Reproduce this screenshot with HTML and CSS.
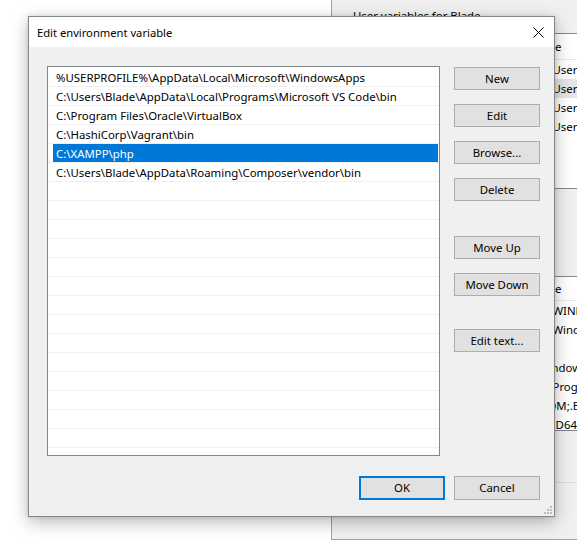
FILE: index.html
```html
<!DOCTYPE html>
<html>
<head>
<meta charset="utf-8">
<link rel="stylesheet" href="styles.css">
</head>
<body>
<div class="desktop">
  <div class="bgwin">
    <div class="bg-label">User variables for Blade</div>
    <div class="bg-list bg-list1">
      <div class="bg-head"><span class="c1">Variable</span><span class="c2">Value</span></div>
      <div class="bg-row"><span class="c1">OneDrive</span><span class="c2">C:\Users\Blade\OneDrive</span></div>
      <div class="bg-row sel"><span class="c1">Path</span><span class="c2">C:\Users\Blade\AppData\Local\Microsoft</span></div>
      <div class="bg-row"><span class="c1">TEMP</span><span class="c2">C:\Users\Blade\AppData\Local\Temp</span></div>
      <div class="bg-row"><span class="c1">TMP</span><span class="c2">C:\Users\Blade\AppData\Local\Temp</span></div>
    </div>
    <div class="bg-list bg-list2">
      <div class="bg-head"><span class="c1">Variable</span><span class="c2">Value</span></div>
      <div class="bg-row"><span class="c1">ComSpec</span><span class="c2">C:\WINDOWS\system32\cmd.exe</span></div>
      <div class="bg-row"><span class="c1">DriverData</span><span class="c2">C:\Windows\System32\Drivers\DriverData</span></div>
      <div class="bg-row"><span class="c1">NUMBER_OF_PROCESSORS</span><span class="c2">8</span></div>
      <div class="bg-row"><span class="c1">OS</span><span class="c2">Windows_NT</span></div>
      <div class="bg-row"><span class="c1">Path</span><span class="c2">C:\Program Files\Common Files</span></div>
      <div class="bg-row"><span class="c1">PATHEXT</span><span class="c2">.COM;.EXE;.BAT;.CMD</span></div>
      <div class="bg-row"><span class="c1">PROCESSOR_ARCHITECTURE</span><span class="c2">AMD64</span></div>
    </div>
    <div class="bg-group-end"></div>
    <div class="bg-bottom"></div>
  </div>

  <div class="dialog">
    <div class="titlebar">
      <span class="title">Edit environment variable</span>
      <svg class="close" width="11" height="11" viewBox="0 0 11 11"><path d="M0.5 0.5 L10.5 10.5 M10.5 0.5 L0.5 10.5" stroke="#000" stroke-width="1" fill="none"/></svg>
    </div>
    <div class="body">
      <div class="main">
        <div class="list">
          <div class="row"><span class="cell">%USERPROFILE%\AppData\Local\Microsoft\WindowsApps</span></div>
          <div class="row"><span class="cell">C:\Users\Blade\AppData\Local\Programs\Microsoft VS Code\bin</span></div>
          <div class="row"><span class="cell">C:\Program Files\Oracle\VirtualBox</span></div>
          <div class="row"><span class="cell">C:\HashiCorp\Vagrant\bin</span></div>
          <div class="row selected"><span class="cell">C:\XAMPP\php</span></div>
          <div class="row"><span class="cell">C:\Users\Blade\AppData\Roaming\Composer\vendor\bin</span></div>
          <div class="row"><span class="cell"></span></div>
          <div class="row"><span class="cell"></span></div>
          <div class="row"><span class="cell"></span></div>
          <div class="row"><span class="cell"></span></div>
          <div class="row"><span class="cell"></span></div>
          <div class="row"><span class="cell"></span></div>
          <div class="row"><span class="cell"></span></div>
          <div class="row"><span class="cell"></span></div>
          <div class="row"><span class="cell"></span></div>
          <div class="row"><span class="cell"></span></div>
          <div class="row"><span class="cell"></span></div>
          <div class="row"><span class="cell"></span></div>
          <div class="row"><span class="cell"></span></div>
          <div class="row"><span class="cell"></span></div>
          <div class="row"><span class="cell"></span></div>
        </div>
        <div class="side">
          <button class="btn">New</button>
          <button class="btn">Edit</button>
          <button class="btn">Browse...</button>
          <button class="btn">Delete</button>
          <button class="btn sep1">Move Up</button>
          <button class="btn">Move Down</button>
          <button class="btn sep2">Edit text...</button>
        </div>
      </div>
      <div class="footer">
        <button class="btn btn-lg default">OK</button>
        <button class="btn btn-lg">Cancel</button>
      </div>
      <svg class="grip" width="8" height="8" viewBox="0 0 8 8">
        <rect x="6" y="0" width="2" height="2" fill="#bcbcbc"/>
        <rect x="3" y="3" width="2" height="2" fill="#bcbcbc"/>
        <rect x="6" y="3" width="2" height="2" fill="#bcbcbc"/>
        <rect x="0" y="6" width="2" height="2" fill="#bcbcbc"/>
        <rect x="3" y="6" width="2" height="2" fill="#bcbcbc"/>
        <rect x="6" y="6" width="2" height="2" fill="#bcbcbc"/>
      </svg>
    </div>
  </div>
</div>
</body>
</html>
```

FILE: styles.css
```css
html, body {
  margin: 0;
  padding: 0;
}

body {
  background: #ffffff;
  font-family: "Segoe UI", "Noto Sans", sans-serif;
  font-size: 11.4px;
  color: #000;
}

.desktop {
  position: relative;
  width: 577px;
  height: 540px;
  overflow: hidden;
  background: #ffffff;
}

/* ---------- background window ---------- */
.bgwin {
  position: absolute;
  left: 331px;
  top: 0;
  width: 320px;
  height: 560px;
  box-sizing: border-box;
  background: #f0f0f0;
  border-left: 1px solid #a0a0a0;
  display: flex;
  flex-direction: column;
}

.bg-label {
  padding-left: 21px;
  margin-top: 8px;
  line-height: 16px;
  height: 16px;
  white-space: nowrap;
}

.bg-list {
  margin-left: 13px;
  background: #fff;
  border: 1px solid #828790;
  border-right: none;
  overflow: hidden;
  white-space: nowrap;
}

.bg-list1 {
  margin-top: 9px;
  height: 154px;
}

.bg-list2 {
  margin-top: 87px;
  height: 153px;
}

.bg-head {
  height: 26px;
  line-height: 26px;
  display: flex;
  border-bottom: 1px solid #e5e5e5;
  box-sizing: border-box;
}

.bg-list2 .bg-head {
  height: 24px;
  line-height: 24px;
}

.bg-row {
  height: 19px;
  line-height: 19px;
  display: flex;
}

.bg-row.sel {
  background: #e5e5e5;
}

.c1 {
  width: 186px;
  padding-left: 6px;
  flex: none;
  overflow: hidden;
}

.c2 {
  padding-left: 0;
}

.bg-head .c1 {
  border-right: 1px solid #e5e5e5;
  width: 179px;
}

.bg-head .c2 {
  padding-left: 0;
}

.bg-group-end {
  margin-top: 51px;
  border-top: 1px solid #dcdcdc;
  height: 0;
}

.bg-bottom {
  margin-top: 56px;
  border-top: 1px solid #a0a0a0;
  height: 0;
}

/* ---------- dialog ---------- */
.dialog {
  position: absolute;
  left: 28px;
  top: 16px;
  width: 527px;
  height: 501px;
  box-sizing: border-box;
  border: 1px solid #868686;
  background: #f0f0f0;
  box-shadow: 0 5px 16px rgba(0, 0, 0, 0.28), 0 0 4px rgba(0, 0, 0, 0.12);
  display: flex;
  flex-direction: column;
}

.titlebar {
  height: 30px;
  flex: none;
  background: #ffffff;
  display: flex;
  align-items: center;
  justify-content: space-between;
  padding-left: 8px;
  padding-right: 10px;
}

.title {
  font-size: 11.2px;
  line-height: 29px;
  white-space: nowrap;
}

.close {
  display: block;
}

.body {
  position: relative;
  flex: 1;
  padding: 19px 14px 16px 18px;
  display: flex;
  flex-direction: column;
}

.main {
  display: flex;
  gap: 14px;
}

.list {
  width: 393px;
  height: 390px;
  box-sizing: border-box;
  border: 1px solid #828790;
  background: #ffffff;
  padding-top: 1px;
  overflow: hidden;
  flex: none;
}

.row {
  height: 19px;
  box-sizing: border-box;
  border-bottom: 1px solid #f0f0f0;
  display: flex;
}

.cell {
  flex: 1;
  margin-left: 5px;
  margin-right: 1px;
  padding-left: 3px;
  line-height: 19px;
  height: 18px;
  white-space: nowrap;
}

.row.selected .cell {
  background: #0078d7;
  color: #ffffff;
}

.side {
  width: 86px;
  padding-top: 1px;
  display: flex;
  flex-direction: column;
  gap: 14px;
}

.btn {
  font-family: "Segoe UI", "Noto Sans", sans-serif;
  font-size: 11.4px;
  color: #000;
  width: 86px;
  height: 23px;
  padding: 0;
  margin: 0;
  box-sizing: border-box;
  border: 1px solid #adadad;
  background: #e1e1e1;
  border-radius: 0;
  line-height: 20px;
  text-align: center;
}

.sep1 {
  margin-top: 21px;
}

.sep2 {
  margin-top: 19px;
}

.footer {
  margin-top: 20px;
  display: flex;
  justify-content: flex-end;
  gap: 9px;
}

.btn-lg {
  height: 24px;
}

.btn.default {
  border: 2px solid #0078d7;
}

.grip {
  position: absolute;
  right: 2px;
  bottom: 2px;
  display: block;
}
```
